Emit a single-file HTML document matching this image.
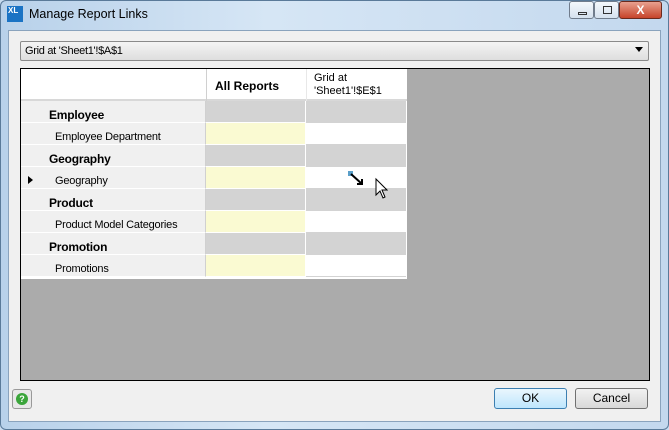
<!DOCTYPE html>
<html><head><style>
*{margin:0;padding:0;box-sizing:border-box}
body{width:669px;height:430px;overflow:hidden;background:#c9dcef;font-family:"Liberation Sans",sans-serif;font-size:12px;position:relative}
.frame{position:absolute;left:0;top:0;width:669px;height:430px;border:1px solid #5a7a99;border-radius:6px;background:linear-gradient(to right,#b8d1ea,#d6e6f5 40%,#c3d8ee);}
.client{position:absolute;left:8px;top:30px;width:653px;height:392px;background:#f0f0f0;border:1px solid #8aa3bd}
.title{position:absolute;left:29px;top:7px;font-size:12.5px;color:#000}
.logo{position:absolute;left:7px;top:6px;width:16px;height:16px;background:#1a73c4;color:#fff;font-size:8px;font-weight:bold;line-height:10px;padding-left:1px}
.cb{position:absolute;top:1px;height:18px;border:1px solid #707c8c;border-radius:3px;background:linear-gradient(#f4f8fc,#d5e1ee)}
.combo{position:absolute;left:20px;top:41px;width:629px;height:20px;border:1px solid #8a8a8a;border-radius:2px;background:linear-gradient(#f4f4f4,#dedede);font-size:11px;padding:3px 4px;letter-spacing:-0.3px}
.grid{position:absolute;left:20px;top:68px;width:630px;height:313px;border:1px solid #000;background:#ababab}
.cell{position:absolute;height:22px;font-size:11px;line-height:21px}
.lbl{position:absolute;height:22px;font-size:11px;line-height:22px;padding-top:3px;letter-spacing:-0.2px}
.btn{position:absolute;top:388px;height:21px;border:1px solid #707070;border-radius:3px;background:linear-gradient(#f2f2f2,#d8d8d8);text-align:center;line-height:19px;font-size:12px}
</style></head><body>
<div class="frame"></div>
<div class="logo">XL</div>
<div class="title">Manage Report Links</div>
<div class="cb" style="left:569px;width:25px"><div style="position:absolute;left:8px;top:10px;width:9px;height:3px;border:1px solid #333"></div></div>
<div class="cb" style="left:594px;width:25px"><div style="position:absolute;left:8px;top:4px;width:9px;height:8px;border:1px solid #333"></div></div>
<div class="cb" style="left:619px;width:43px;background:linear-gradient(#e8a18f,#c7442a);color:#fff;font-weight:bold;text-align:center;line-height:16px;border-color:#6b2a1e">X</div>
<div class="client"></div>
<div class="combo">Grid at 'Sheet1'!$A$1<span style="position:absolute;right:5px;top:5px;border-left:4px solid transparent;border-right:4px solid transparent;border-top:5px solid #000"></span></div>
<div class="grid">
<div style="position:absolute;left:0;top:0;width:386px;height:32px;background:#fff;border-bottom:2px solid #d8d8d8"></div>
<div style="position:absolute;left:185px;top:0;width:1px;height:210px;background:#d0d0d0"></div>
<div style="position:absolute;left:285px;top:0;width:1px;height:210px;background:#e8e8e8"></div>
<div style="position:absolute;left:194px;top:10px;font-weight:bold;font-size:12px">All Reports</div>
<div style="position:absolute;left:293px;top:3px;font-size:11px;line-height:13px">Grid at<br>'Sheet1'!$E$1</div>
<div style="position:absolute;left:0;top:32px;width:386px;height:178px;background:#fff"></div>
</div>
<div id="rows"></div>
<script>
var rows=[["Employee",1],["Employee Department",0],["Geography",1],["Geography",0],["Product",1],["Product Model Categories",0],["Promotion",1],["Promotions",0]];
var h="";
rows.forEach(function(r,i){var y=101+i*22;
h+='<div class="cell" style="left:21px;top:'+y+'px;width:185px;background:#f0f0f0;border-bottom:1px solid #fff;border-right:1px solid #d0d0d0"></div>';
h+='<div class="lbl" style="left:'+(r[1]?49:55)+'px;top:'+y+'px;'+(r[1]?'font-weight:bold;font-size:12px':'')+'">'+r[0]+'</div>';
h+='<div class="cell" style="left:206px;top:'+y+'px;width:100px;border-bottom:1px solid #fff;border-right:1px solid #fff;background:'+(r[1]?'#d3d3d3':'#fafad2')+'"></div>';
h+='<div class="cell" style="left:306px;top:'+y+'px;width:100px;border-bottom:1px solid #d3d3d3;background:'+(r[1]?'#d3d3d3':'#fff')+'"></div>';
});
h+='<div style="position:absolute;left:28px;top:176px;border-top:4px solid transparent;border-bottom:4px solid transparent;border-left:5px solid #000"></div>';
h+='<svg style="position:absolute;left:348px;top:171px" width="40" height="30"><rect x="0" y="0" width="5" height="5" fill="#5a9fc9"/><path d="M3 3 L14 13 M9 13 L14 13 L14 8" stroke="#000" stroke-width="2" fill="none"/><path d="M28 8 L28 24 L32 20 L35 27 L37 26 L34 19 L39 19 Z" fill="#fff" stroke="#000" stroke-width="1"/></svg>';
document.getElementById("rows").innerHTML=h;
</script>
<div style="position:absolute;left:12px;top:389px;width:20px;height:20px;border:1px solid #999;border-radius:3px;background:#e8e8e8"><div style="margin:3px;width:12px;height:12px;border-radius:50%;background:#3aa53a;color:#fff;font-size:9px;font-weight:bold;text-align:center;line-height:12px">?</div></div>
<div class="btn" style="left:494px;width:73px;border-color:#3c7fb1;background:linear-gradient(#eaf6fd,#bee6fd)">OK</div>
<div class="btn" style="left:575px;width:73px">Cancel</div>
</body></html>
